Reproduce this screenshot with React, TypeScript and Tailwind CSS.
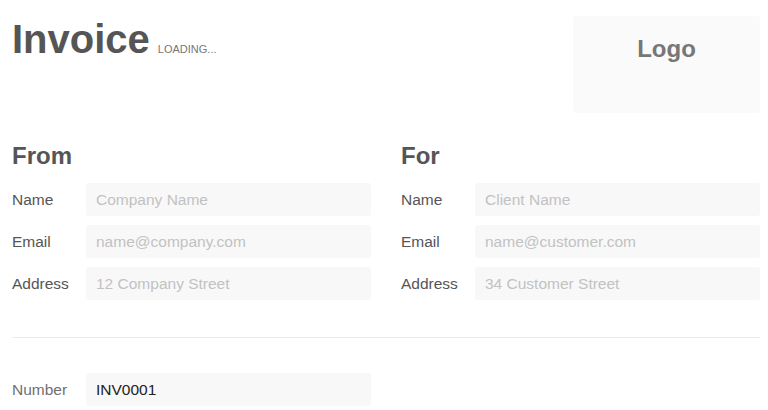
const font = { fontFamily: '"Liberation Sans", Arial, sans-serif' };

type Field = { label: string; placeholder: string };

const fromFields: Field[] = [
  { label: 'Name', placeholder: 'Company Name' },
  { label: 'Email', placeholder: 'name@company.com' },
  { label: 'Address', placeholder: '12 Company Street' },
];

const forFields: Field[] = [
  { label: 'Name', placeholder: 'Client Name' },
  { label: 'Email', placeholder: 'name@customer.com' },
  { label: 'Address', placeholder: '34 Customer Street' },
];

const FieldRow = ({ label, placeholder, value, muted }: Field & { value?: string; muted?: boolean }) => (
  <div className="flex items-center">
    <label className={`w-[74px] shrink-0 text-[15.5px] ${muted ? 'text-[#6f6f6f]' : 'text-[#555]'}`}>{label}</label>
    <input
      className="h-[33px] min-w-0 flex-1 rounded-[3px] bg-[#f8f8f8] px-[10px] text-[15.5px] text-[#222] outline-none placeholder:text-[#c2c2c2]"
      style={font}
      placeholder={placeholder}
      defaultValue={value}
    />
  </div>
);

const Party = ({ title, fields }: { title: string; fields: Field[] }) => (
  <div className="flex flex-1 flex-col">
    <h2 className="mb-[13px] text-[24px] leading-[28px] font-bold text-[#555]">{title}</h2>
    <div className="flex flex-col gap-[9px]">
      {fields.map((f) => (
        <FieldRow key={f.label} {...f} />
      ))}
    </div>
  </div>
);

export default function App() {
  return (
    <div className="h-screen overflow-hidden bg-white pt-[16px] pr-[8px] pl-[12px]" style={font}>
      {/* header */}
      <div className="flex items-start justify-between">
        <div className="flex items-baseline">
          <h1 className="text-[40px] leading-[46px] font-bold text-[#555]">Invoice</h1>
          <span className="ml-[8px] text-[11px] text-[#777]">LOADING...</span>
        </div>
        <div className="h-[97px] w-[187px] rounded-[3px] bg-[#fafafa] pt-[19px] text-center">
          <span className="text-[24px] leading-[28px] font-bold text-[#777]">Logo</span>
        </div>
      </div>

      {/* parties */}
      <div className="mt-[29px] flex gap-[30px]">
        <Party title="From" fields={fromFields} />
        <Party title="For" fields={forFields} />
      </div>

      <div className="mt-[37px] border-t border-[#ebebeb]" />

      {/* meta */}
      <div className="mt-[35px] flex gap-[30px]">
        <div className="flex-1">
          <FieldRow label="Number" placeholder="" value="INV0001" muted />
        </div>
        <div className="flex-1" />
      </div>
    </div>
  );
}
